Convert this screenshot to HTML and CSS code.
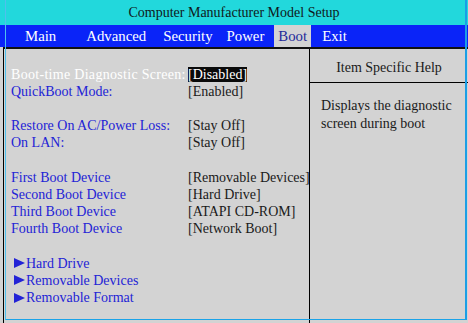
FILE: index.html
```html
<!DOCTYPE html>
<html>
<head>
<meta charset="utf-8">
<link rel="stylesheet" href="styles.css">
</head>
<body>
<div class="screen">
  <header class="title">Computer Manufacturer Model Setup</header>
  <nav class="menu">
    <span class="tab tab-main">Main</span>
    <span class="tab tab-advanced">Advanced</span>
    <span class="tab tab-security">Security</span>
    <span class="tab tab-power">Power</span>
    <span class="tab tab-boot active">Boot</span>
    <span class="tab tab-exit">Exit</span>
  </nav>
  <div class="panel">
    <section class="settings">
      <div class="row"><span class="label current">Boot-time Diagnostic Screen:</span><span class="value"><span class="selected">[Disabled]</span></span></div>
      <div class="row"><span class="label">QuickBoot Mode:</span><span class="value">[Enabled]</span></div>
      <div class="gap"></div>
      <div class="row"><span class="label">Restore On AC/Power Loss:</span><span class="value">[Stay Off]</span></div>
      <div class="row"><span class="label">On LAN:</span><span class="value">[Stay Off]</span></div>
      <div class="gap"></div>
      <div class="row"><span class="label">First Boot Device</span><span class="value">[Removable Devices]</span></div>
      <div class="row"><span class="label">Second Boot Device</span><span class="value">[Hard Drive]</span></div>
      <div class="row"><span class="label">Third Boot Device</span><span class="value">[ATAPI CD-ROM]</span></div>
      <div class="row"><span class="label">Fourth Boot Device</span><span class="value">[Network Boot]</span></div>
      <div class="gap"></div>
      <div class="sub"><svg class="arrow" width="11" height="10" viewBox="0 0 11 10"><polygon points="0,0 11,5 0,10" fill="#2323d6"/></svg>Hard Drive</div>
      <div class="sub"><svg class="arrow" width="11" height="10" viewBox="0 0 11 10"><polygon points="0,0 11,5 0,10" fill="#2323d6"/></svg>Removable Devices</div>
      <div class="sub"><svg class="arrow" width="11" height="10" viewBox="0 0 11 10"><polygon points="0,0 11,5 0,10" fill="#2323d6"/></svg>Removable Format</div>
    </section>
    <aside class="help">
      <div class="help-title">Item Specific Help</div>
      <p class="help-text">Displays the diagnostic<br>screen during boot</p>
    </aside>
  </div>
  <div class="frame"></div>
</div>
</body>
</html>
```

FILE: styles.css
```css
html, body {
  margin: 0;
  padding: 0;
}
body {
  width: 468px;
  height: 323px;
  overflow: hidden;
  background: #d3d3d3;
  font-family: "Liberation Serif", "Times New Roman", serif;
  font-size: 14px;
}
.screen {
  position: relative;
  width: 468px;
  height: 323px;
  display: flex;
  flex-direction: column;
}
.title {
  height: 25px;
  background: #22d8dc;
  color: #101820;
  text-align: center;
  line-height: 26px;
  font-size: 14px;
}
.menu {
  height: 22px;
  background: #0a24f8;
  display: flex;
  align-items: stretch;
}
.tab {
  color: #ffffff;
  padding: 0 4px;
  line-height: 23px;
  font-size: 14.8px;
}
.tab-main { margin-left: 21px; }
.tab-advanced { margin-left: 22px; }
.tab-security { margin-left: 9px; }
.tab-power { margin-left: 6px; }
.tab-boot { margin-left: 6px; }
.tab-exit { margin-left: 7px; }
.tab.active {
  background: #d3d3d3;
  color: #1f2a9a;
}
.panel {
  flex: 1;
  margin-left: 3px;
  border-left: 1px solid #000;
  border-top: 2px solid #111;
  display: grid;
  grid-template-columns: 305px 1fr;
}
.settings {
  padding: 16.5px 0 0 7px;
  line-height: 17.2px;
}
.row {
  display: grid;
  grid-template-columns: 177px auto;
  white-space: nowrap;
}
.gap {
  height: 17.2px;
}
.label {
  color: #2323d6;
}
.label.current {
  color: #ffffff;
  letter-spacing: 0.3px;
}
.value {
  color: #1a1a1a;
}
.selected {
  background: #0a0a0a;
  color: #ffffff;
}
.sub {
  color: #2323d6;
  padding-left: 3px;
  display: flex;
  align-items: center;
}
.arrow {
  margin-right: 1px;
}
.help {
  border-left: 1px solid #000;
}
.help-title {
  height: 34px;
  box-sizing: border-box;
  padding-top: 9px;
  line-height: 20px;
  text-align: center;
  color: #1a1a1a;
  border-bottom: 1px solid #000;
}
.help-text {
  margin: 14px 0 0 0;
  padding-left: 11px;
  line-height: 18px;
  color: #1a1a1a;
}
.frame {
  position: absolute;
  left: 5px;
  top: 0;
  width: 462px;
  height: 320px;
  box-sizing: border-box;
  border-left: 1px solid #4fc0ec;
  border-right: 2px solid #1a9ee6;
  border-bottom: 1px solid #1aa3e8;
  pointer-events: none;
}
```
